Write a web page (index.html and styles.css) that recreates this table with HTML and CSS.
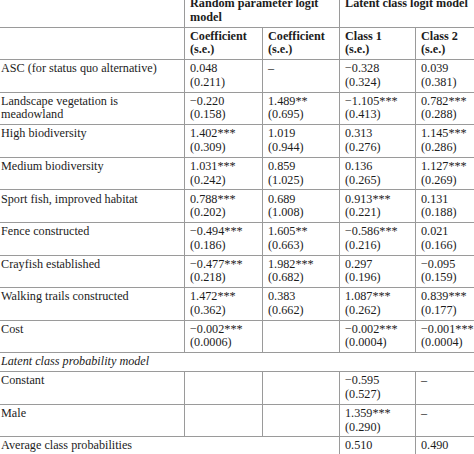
FILE: index.html
```html
<!DOCTYPE html>
<html>
<head>
<meta charset="utf-8">
<link rel="stylesheet" href="styles.css">
</head>
<body>
<table class="results">
  <colgroup>
    <col class="c-label">
    <col class="c-num">
    <col class="c-num3">
    <col class="c-num4">
    <col class="c-num4">
  </colgroup>
  <thead>
    <tr>
      <th></th>
      <th colspan="2">Random parameter logit model</th>
      <th colspan="2">Latent class logit model</th>
    </tr>
    <tr>
      <th></th>
      <th>Coefficient<br>(s.e.)</th>
      <th>Coefficient<br>(s.e.)</th>
      <th>Class 1<br>(s.e.)</th>
      <th>Class 2<br>(s.e.)</th>
    </tr>
  </thead>
  <tbody>
    <tr><td>ASC (for status quo alternative)</td><td>0.048<br>(0.211)</td><td>–</td><td>−0.328<br>(0.324)</td><td>0.039<br>(0.381)</td></tr>
    <tr><td>Landscape vegetation is meadowland</td><td>−0.220<br>(0.158)</td><td>1.489**<br>(0.695)</td><td>−1.105***<br>(0.413)</td><td>0.782***<br>(0.288)</td></tr>
    <tr><td>High biodiversity</td><td>1.402***<br>(0.309)</td><td>1.019<br>(0.944)</td><td>0.313<br>(0.276)</td><td>1.145***<br>(0.286)</td></tr>
    <tr><td>Medium biodiversity</td><td>1.031***<br>(0.242)</td><td>0.859<br>(1.025)</td><td>0.136<br>(0.265)</td><td>1.127***<br>(0.269)</td></tr>
    <tr><td>Sport fish, improved habitat</td><td>0.788***<br>(0.202)</td><td>0.689<br>(1.008)</td><td>0.913***<br>(0.221)</td><td>0.131<br>(0.188)</td></tr>
    <tr><td>Fence constructed</td><td>−0.494***<br>(0.186)</td><td>1.605**<br>(0.663)</td><td>−0.586***<br>(0.216)</td><td>0.021<br>(0.166)</td></tr>
    <tr><td>Crayfish established</td><td>−0.477***<br>(0.218)</td><td>1.982***<br>(0.682)</td><td>0.297<br>(0.196)</td><td>−0.095<br>(0.159)</td></tr>
    <tr><td>Walking trails constructed</td><td>1.472***<br>(0.362)</td><td>0.383<br>(0.662)</td><td>1.087***<br>(0.262)</td><td>0.839***<br>(0.177)</td></tr>
    <tr><td>Cost</td><td>−0.002***<br>(0.0006)</td><td></td><td>−0.002***<br>(0.0004)</td><td>−0.001***<br>(0.0004)</td></tr>
    <tr><td colspan="5" class="section">Latent class probability model</td></tr>
    <tr><td>Constant</td><td></td><td></td><td>−0.595<br>(0.527)</td><td>–</td></tr>
    <tr><td>Male</td><td></td><td></td><td>1.359***<br>(0.290)</td><td>–</td></tr>
    <tr><td colspan="3">Average class probabilities</td><td>0.510</td><td>0.490</td></tr>
  </tbody>
</table>
</body>
</html>
```
FILE: styles.css
```css
html, body {
  margin: 0;
  padding: 0;
  overflow: hidden;
  background: #ffffff;
}

.results {
  border-collapse: collapse;
  table-layout: fixed;
  width: 496px;
  margin-left: -5px;
  margin-top: -6px;
  font-family: "Liberation Serif", "Times New Roman", serif;
  font-size: 12.2px;
  line-height: 13.6px;
  color: #1c1c1c;
}

.c-label { width: 189px; }
.c-num { width: 78px; }
.c-num3 { width: 77px; }
.c-num4 { width: 76px; }

.results th,
.results td {
  border: 1px solid #9a9a9a;
  padding: 2.2px 5px;
  text-align: left;
  vertical-align: top;
  white-space: normal;
}

.results th {
  font-weight: bold;
}

.results .section {
  font-style: italic;
}
```
